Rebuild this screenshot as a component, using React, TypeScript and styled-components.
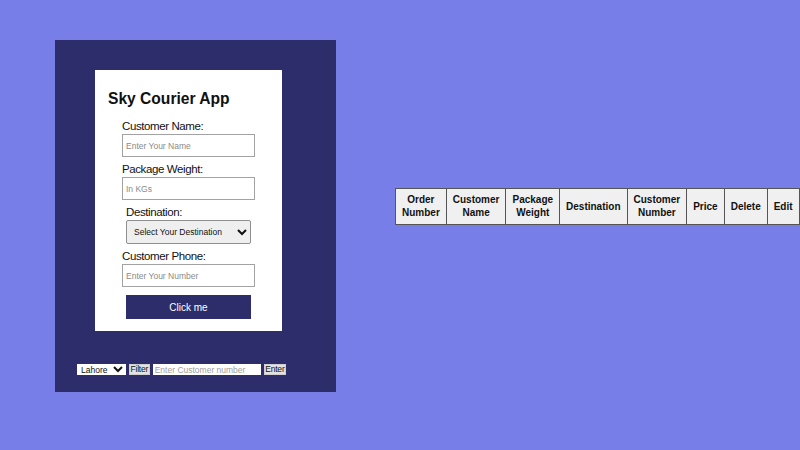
import styled, { createGlobalStyle } from "styled-components";

const GlobalStyle = createGlobalStyle`
  html, body {
    margin: 0;
    padding: 0;
    background-color: #787ee8;
    overflow: hidden;
  }
  body {
    font-family: "Liberation Sans", Arial, sans-serif;
  }
`;

const Page = styled.div`
  display: flex;
  flex-direction: row;
  align-items: flex-start;
  width: 800px;
  height: 450px;
  padding: 40px 0 0 55px;
  box-sizing: border-box;
`;

const Panel = styled.div`
  width: 281px;
  flex-shrink: 0;
  background-color: #2e2d6b;
  padding: 30px 0 17px 0;
  box-sizing: border-box;
  display: flex;
  flex-direction: column;
`;

const Card = styled.div`
  width: 187px;
  margin-left: 40px;
  background-color: #ffffff;
  padding: 20px 0 12px 0;
  box-sizing: border-box;
  display: flex;
  flex-direction: column;
`;

const Title = styled.h1`
  margin: 0 0 11px 13px;
  font-size: 15.6px;
  line-height: 18px;
  font-weight: bold;
  color: #111;
`;

const Field = styled.div<{ $gap?: number }>`
  align-self: center;
  display: flex;
  flex-direction: column;
  align-items: flex-start;
  margin-top: ${(props) => props.$gap ?? 0}px;
`;

const Label = styled.label`
  font-family: "Liberation Sans", sans-serif;
  font-size: 11.5px;
  line-height: 14px;
  letter-spacing: -0.4px;
  color: #111;
  margin-bottom: 1px;
`;

const TextInput = styled.input`
  width: 133px;
  height: 23px;
  box-sizing: border-box;
  border: 1px solid #a2a2a2;
  padding: 0 3px;
  font-family: "Liberation Sans", sans-serif;
  font-size: 8.5px;
  outline: none;
  &::placeholder {
    color: #8a8a8a;
  }
`;

const Select = styled.select`
  width: 125px;
  height: 24px;
  box-sizing: border-box;
  border: 1px solid #8f8f8f;
  border-radius: 2px;
  background-color: #efefef;
  padding: 0 3px;
  font-family: "Liberation Sans", sans-serif;
  font-size: 8.5px;
  color: #111;
`;

const SubmitButton = styled.button`
  align-self: center;
  width: 125px;
  height: 24px;
  margin-top: 8px;
  border: none;
  background-color: #2e2d6b;
  color: #ffffff;
  font-family: "Liberation Sans", sans-serif;
  font-size: 10px;
  cursor: pointer;
`;

const FilterRow = styled.div`
  display: flex;
  align-items: center;
  gap: 3px;
  margin: 33px 0 0 22px;
  height: 11px;
`;

const SmallSelect = styled.select`
  width: 49px;
  height: 11px;
  box-sizing: border-box;
  border: none;
  padding: 0;
  background-color: #ffffff;
  font-family: "Liberation Sans", sans-serif;
  font-size: 8.5px;
  color: #111;
`;

const SmallButton = styled.button`
  height: 11px;
  box-sizing: border-box;
  border: 1px solid #cfcfcf;
  background-color: #e2e2e2;
  padding: 0 0.5px;
  font-family: "Liberation Sans", sans-serif;
  font-size: 8.5px;
  line-height: 9px;
  letter-spacing: -0.2px;
  color: #111;
`;

const SmallInput = styled.input`
  width: 108px;
  height: 11px;
  box-sizing: border-box;
  border: none;
  padding: 0 2px;
  font-family: "Liberation Sans", sans-serif;
  font-size: 8.5px;
  &::placeholder {
    color: #a0a0a0;
  }
`;

const Table = styled.table`
  margin: 148px 0 0 59px;
  width: min-content;
  border-collapse: collapse;
  flex-shrink: 0;
`;

const HeadCell = styled.th`
  border: 1px solid #555;
  background-color: #f0f0f0;
  padding: 4px 6px 5px;
  font-family: "Liberation Sans", sans-serif;
  font-size: 10px;
  line-height: 13px;
  font-weight: bold;
  color: #111;
  text-align: center;
`;

const columns = [
  "Order Number",
  "Customer Name",
  "Package Weight",
  "Destination",
  "Customer Number",
  "Price",
  "Delete",
  "Edit",
];

export default function App() {
  return (
    <>
      <GlobalStyle />
      <Page>
        <Panel>
          <Card>
            <Title>Sky Courier App</Title>
            <Field>
              <Label>Customer Name:</Label>
              <TextInput placeholder="Enter Your Name" />
            </Field>
            <Field $gap={5}>
              <Label>Package Weight:</Label>
              <TextInput placeholder="In KGs" />
            </Field>
            <Field $gap={5}>
              <Label>Destination:</Label>
              <Select defaultValue="">
                <option value="">Select Your Destination</option>
                <option value="lahore">Lahore</option>
                <option value="karachi">Karachi</option>
                <option value="islamabad">Islamabad</option>
              </Select>
            </Field>
            <Field $gap={5}>
              <Label>Customer Phone:</Label>
              <TextInput placeholder="Enter Your Number" />
            </Field>
            <SubmitButton>Click me</SubmitButton>
          </Card>
          <FilterRow>
            <SmallSelect defaultValue="lahore">
              <option value="lahore">Lahore</option>
              <option value="karachi">Karachi</option>
              <option value="islamabad">Islamabad</option>
            </SmallSelect>
            <SmallButton>Filter</SmallButton>
            <SmallInput placeholder="Enter Customer number" />
            <SmallButton>Enter</SmallButton>
          </FilterRow>
        </Panel>
        <Table>
          <thead>
            <tr>
              {columns.map((c) => (
                <HeadCell key={c}>{c}</HeadCell>
              ))}
            </tr>
          </thead>
        </Table>
      </Page>
    </>
  );
}
